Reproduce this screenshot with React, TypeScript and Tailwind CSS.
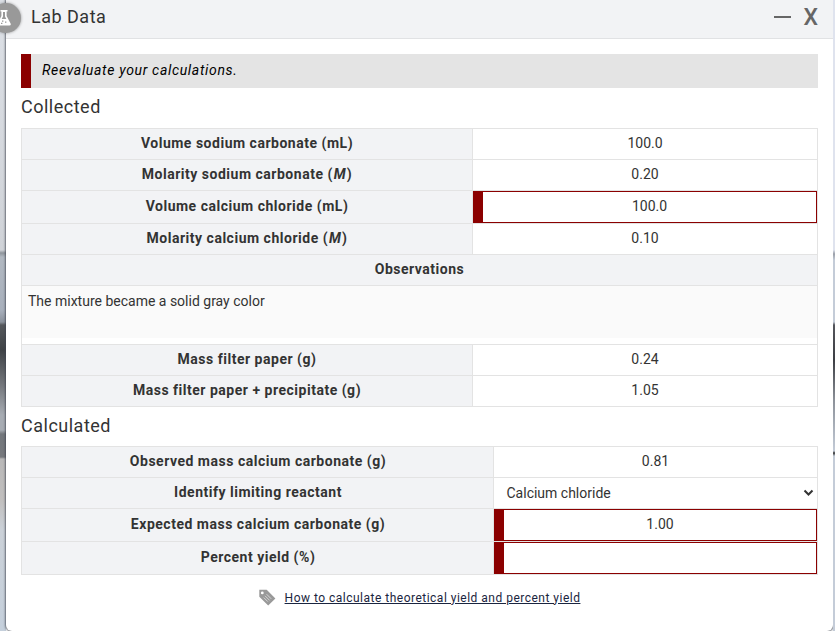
import { useState, type ReactNode } from "react";

const labelCell =
  "flex items-center justify-center bg-[#f2f3f5] text-sm font-bold tracking-[0.51px] text-[#333]";
const cellBase = "flex border-l border-[#e3e3e3] bg-white text-sm text-[#333]";

interface RowProps {
  label: ReactNode;
  children: ReactNode;
  variant: "collected" | "calculated";
  tall?: boolean;
}

function Row({ label, children, variant, tall }: RowProps) {
  return (
    <div
      className={`grid border-b border-[#e3e3e3] ${tall ? "h-[33px]" : "h-[31px]"} ${
        variant === "collected" ? "grid-cols-[450px_1fr]" : "grid-cols-[471px_1fr]"
      }`}
    >
      <div className={`${labelCell} ${variant === "calculated" ? "pl-px" : ""}`}>
        <span className="-mt-0.5">{label}</span>
      </div>
      <div className={cellBase}>{children}</div>
    </div>
  );
}

function Value({ children }: { children: ReactNode }) {
  return (
    <div className="flex flex-1 items-center justify-center">
      <span className="-mt-0.5">{children}</span>
    </div>
  );
}

function Molarity() {
  return <i className="ml-px tracking-[1px]">M</i>;
}

function InvalidInput({ initial = "" }: { initial?: string }) {
  const [value, setValue] = useState(initial);
  return (
    <input
      value={value}
      onChange={(e) => setValue(e.target.value)}
      className="h-8 w-full min-w-0 border border-l-[10px] border-[#8b0000] bg-white pb-0.5 text-center text-sm outline-none"
    />
  );
}

function FlaskIcon() {
  return (
    <svg width="16" height="18" viewBox="0 0 16 18">
      <path
        fill="#fff"
        fillRule="evenodd"
        d="M4.5 1h7v1.6h-.9V7l4 7.6q.7 1.9-1.3 1.9H2.7q-2 0-1.3-1.9l4-7.6V2.6h-.9zM7 3v4.4L5.7 10h4.6L9 7.4V3zM6 11.5h1.4v1.3H6zm3 1h1.4v1.3H9zm-4 1.3h1.4v1.3H5z"
      />
    </svg>
  );
}

function TagIcon() {
  return (
    <svg width="17" height="17" viewBox="0 0 17 17">
      <path
        fill="#999"
        fillRule="evenodd"
        d="M.3.8h7.4L16.4 9.4 9.2 16.6.3 7.8zM3.3 2.5a1.4 1.4 0 1 0 0 2.8 1.4 1.4 0 0 0 0-2.8z"
      />
      <path stroke="#fff" strokeWidth=".6" d="m7.6 5.2 4.6 4.6M6 6.8l4.6 4.6M4.8 8.6l4 4" />
    </svg>
  );
}

export default function App() {
  return (
    <div className="relative flex h-[631px] w-[835px] overflow-hidden font-['Roboto',sans-serif]">
      {/* Blurred lab bench behind the window */}
      <div className="w-1.5 shrink-0 bg-[linear-gradient(to_bottom,#dce0e6_0px,#d0d3d8_250px,#8f959c_253px,#b1b8c1_257px,#a8b0bc_310px,#8b929c_322px,#55585c_325px,#3f4246_350px,#74777c_385px,#a7acb3_415px,#a7acb3_430px,#73777c_434px,#77797d_457px,#b9b8b8_459px,#c1bfbe_500px,#cbd1d8_530px,#c5d0dc_631px)]" />

      <div className="flex w-[827px] shrink-0 flex-col overflow-hidden rounded-b-md bg-white shadow-[0_0_2px_1px_rgba(60,65,75,0.7)]">
        <header className="flex h-[39px] items-center justify-between border-b border-[#e1e2e4] bg-[#f2f3f5] pr-[15px] pb-[5px] pl-[25px]">
          <h1 className="text-lg tracking-[0.5px] text-[#333]">Lab Data</h1>
          <div className="flex items-center gap-3">
            <button aria-label="Minimize" className="mt-px h-0.5 w-[17px] bg-[#666]" />
            <button aria-label="Close" className="mt-0.5 text-[23px] leading-none font-medium text-[#666]">
              X
            </button>
          </div>
        </header>

        <main className="px-[15px] pt-[15px]">
          <p className="flex h-[34px] items-center border-l-[10px] border-[#8b0000] bg-[#e4e4e4] pb-0.5 pl-[11px] text-sm tracking-[0.67px] text-black italic">
            Reevaluate your calculations.
          </p>

          <h2 className="h-10 pt-[5px] text-lg tracking-[0.5px] text-[#333]">Collected</h2>
          <section className="border-x border-t border-[#e3e3e3]">
            <Row variant="collected" label="Volume sodium carbonate (mL)">
              <Value>100.0</Value>
            </Row>
            <Row variant="collected" label={<>Molarity sodium carbonate (<Molarity />)</>}>
              <Value>0.20</Value>
            </Row>
            <Row variant="collected" tall label="Volume calcium chloride (mL)">
              <InvalidInput initial="100.0" />
            </Row>
            <Row variant="collected" label={<>Molarity calcium chloride (<Molarity />)</>}>
              <Value>0.10</Value>
            </Row>
            <div className={`h-[31px] border-b border-[#e3e3e3] ${labelCell}`}>
              <span className="-mt-0.5">Observations</span>
            </div>
            <div className="h-[59px] border-b border-[#e3e3e3]">
              <p className="h-[52px] bg-[#fafafa] px-1.5 pt-[5px] text-sm text-[#333]">
                The mixture became a solid gray color
              </p>
            </div>
            <Row variant="collected" label="Mass filter paper (g)">
              <Value>0.24</Value>
            </Row>
            <Row variant="collected" label="Mass filter paper + precipitate (g)">
              <Value>1.05</Value>
            </Row>
          </section>

          <h2 className="h-[39px] pt-[5px] text-lg tracking-[0.5px] text-[#333]">Calculated</h2>
          <section className="border-x border-t border-[#e3e3e3]">
            <Row variant="calculated" label="Observed mass calcium carbonate (g)">
              <Value>0.81</Value>
            </Row>
            <Row variant="calculated" label="Identify limiting reactant">
              <button className="flex flex-1 items-center justify-between pr-[3px] pl-[12.5px]">
                <span>Calcium chloride</span>
                <svg width="11" height="8" viewBox="0 0 11 8" fill="none">
                  <path stroke="#333" strokeWidth="2" d="m1.5 1.5 4 4 4-4" />
                </svg>
              </button>
            </Row>
            <Row variant="calculated" tall label="Expected mass calcium carbonate (g)">
              <InvalidInput initial="1.00" />
            </Row>
            <Row variant="calculated" tall label="Percent yield (%)">
              <InvalidInput />
            </Row>
          </section>

          <div className="flex items-center justify-center gap-[9px] pt-3.5">
            <TagIcon />
            <a href="#" className="text-xs tracking-[0.49px] text-[#1a2540] underline">
              How to calculate theoretical yield and percent yield
            </a>
          </div>
        </main>
      </div>

      <div className="flex-1 bg-[linear-gradient(to_bottom,#dfe3ee_0px,#dfe3ee_250px,#9a9fa8_254px,#c4ccd8_260px,#c4ccd8_322px,#54565c_325px,#3c3e44_360px,#8c9199_400px,#c4ccd8_451px,#333_453px,#c4ccd8_456px,#c4ccd8_631px)]" />

      <div className="absolute top-[3px] -left-[9px] flex size-[30px] items-center justify-center rounded-full bg-[#999] pr-1 pb-px shadow-[0_0_3px_rgba(0,0,0,0.4)]">
        <FlaskIcon />
      </div>
    </div>
  );
}
